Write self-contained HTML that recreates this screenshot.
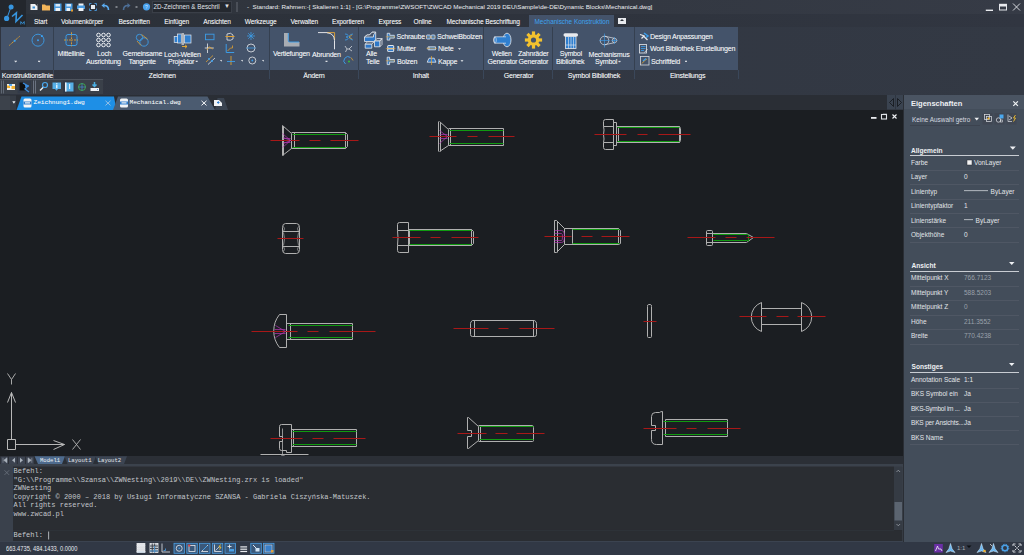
<!DOCTYPE html>
<html><head><meta charset="utf-8">
<style>
*{margin:0;padding:0;box-sizing:border-box}
html,body{width:1024px;height:555px;overflow:hidden;background:#2b2f37;font-family:"Liberation Sans",sans-serif;color:#e2e5ea}
.a{position:absolute}
.t{position:absolute;white-space:nowrap;line-height:1;font-size:6.5px}
.rl{letter-spacing:-0.2px;font-size:7px !important;margin-top:-0.45px}
.mt{color:#f4f6f8;text-shadow:0.3px 0 0 rgba(244,246,248,0.35);letter-spacing:-0.12px}
.m{font-family:"Liberation Mono",monospace}
svg{position:absolute;overflow:visible}
.rl{color:#f4f6f8;text-shadow:0.3px 0 0 rgba(244,246,248,0.35)}
.pl{color:#e2e5e9}
.pv{color:#e2e5e9}
.pd{color:#9aa1aa}
.ps{position:absolute;left:910px;width:109px;height:1px;background:#4f5764}
</style></head><body>
<!-- ===== title bar ===== -->
<div class="a" style="left:0;top:0;width:1024px;height:14px;background:linear-gradient(90deg,#2e333b,#363b46)"></div>
<div class="a" style="left:0;top:14px;width:1024px;height:13px;background:linear-gradient(90deg,#2b3038,#313641)"></div>
<div class="a" style="left:0;top:0;width:26px;height:27px;background:#23272d"></div>
<svg style="left:0;top:0" width="28" height="28" viewBox="0 0 28 28">
<g fill="#3796e0" stroke="#3796e0">
<circle cx="11.1" cy="7.1" r="2.5" stroke="none"/>
<circle cx="6.6" cy="18.4" r="2.6" stroke="none"/>
<line x1="10.6" y1="8" x2="7.2" y2="17.5" stroke-width="1"/>
<polyline points="12,16.5 16.4,12.8 16,21.5 22.5,15" fill="none" stroke-width="1.6" stroke-linejoin="miter"/>
<path d="M20.8,24.5 V21.6 L22.5,23.5 L24.2,21.6 V24.5" fill="none" stroke-width="0.9"/>
</g></svg>
<svg style="left:26px;top:0" width="130" height="14" viewBox="26 0 130 14">
<!-- new -->
<rect x="30.5" y="4" width="7" height="6" fill="#eef0f2"/><path d="M35,4 l2.5,0 v2.5z" fill="#2e333b"/><rect x="32.5" y="6.5" width="2.5" height="2" fill="#3a8fd6"/>
<!-- open -->
<path d="M42,4.5 h3 l1,1 h4 v5 h-8z" fill="#f2b45a"/>
<!-- save -->
<rect x="54" y="3.5" width="7.5" height="7.5" fill="#4a9be0"/><rect x="55.5" y="4" width="4.5" height="2.5" fill="#d9e8f5"/><rect x="55.5" y="8" width="4.5" height="3" fill="#eef2f6"/>
<!-- saveas -->
<rect x="65" y="3.5" width="7.5" height="7.5" fill="#4a9be0"/><rect x="66.5" y="4" width="4.5" height="2.5" fill="#d9e8f5"/><rect x="66.5" y="8" width="3.5" height="3" fill="#eef2f6"/><rect x="71" y="9.5" width="2" height="2" fill="#e8a030"/>
<!-- print -->
<rect x="78.5" y="3.5" width="5" height="2.5" fill="#eef2f6"/><rect x="77" y="5.5" width="8" height="3.5" fill="#4a9be0"/><rect x="78.5" y="8" width="5" height="3" fill="#eef2f6"/>
<!-- zoom extents -->
<path d="M89.5,5.5 v-2 h2 M94.5,3.5 h2 v2 M96.5,8.5 v2 h-2 M91.5,10.5 h-2 v-2" stroke="#4a9be0" stroke-width="0.9" fill="none"/><rect x="91" y="5" width="4" height="4" fill="#e8ecf0"/>
<!-- undo -->
<path d="M108.5,10 C108.5,6.5 106.5,5.5 104,5.5" stroke="#5aaaee" stroke-width="1.6" fill="none"/><path d="M101.5,5.5 L104.5,3 L104.5,8z" fill="#5aaaee"/>
<rect x="115.5" y="6.5" width="2" height="1" fill="#c8ccd2"/>
<!-- redo -->
<path d="M123.5,10 C123.5,6.5 125.5,5.5 128,5.5" stroke="#4c6e96" stroke-width="1.6" fill="none"/><path d="M130.5,5.5 L127.5,3 L127.5,8z" fill="#4c6e96"/>
<rect x="135.5" y="6.5" width="2" height="1" fill="#c8ccd2"/>
<circle cx="146.5" cy="6.8" r="3.6" fill="#4aa2ee"/><text x="146.5" y="8.8" font-size="5" fill="#cfe6fa" text-anchor="middle" font-family="Liberation Sans">?</text>
</svg>
<svg style="left:980px;top:0" width="44" height="14" viewBox="980 0 44 14">
<rect x="985.8" y="9.6" width="7.2" height="1.4" fill="#e8eaee"/>
<rect x="999.5" y="4.3" width="7" height="5.7" fill="none" stroke="#e0e3e7" stroke-width="1"/><rect x="999.5" y="4" width="7" height="2.5" fill="#e8eaee"/>
<path d="M1013,3.5 L1020,10.5 M1020,3.5 L1013,10.5" stroke="#e8eaee" stroke-width="0.9"/>
</svg>

<div class="a" style="left:152px;top:1px;width:80px;height:12px;background:#24282f;border:1px solid #3a3f48"></div>
<div class="t" style="left:153.5px;top:4px;font-size:6.3px">2D-Zeichnen &amp; Beschril</div>
<div class="t" style="left:224px;top:3px;font-size:6px;color:#e0e3e8">▼</div>
<div class="a" style="left:236px;top:2px;width:2px;height:10px;background:#4a4f58"></div>
<div class="t" style="left:247px;top:4px;font-size:6.25px;color:#eceef1"> -&nbsp; Standard: Rahmen:-[ Skalieren 1:1] - [G:\Programme\ZWSOFT\ZWCAD Mechanical 2019 DEU\Sample\de-DE\Dynamic Blocks\Mechanical.dwg]</div>

<!-- menu tabs -->
<div class="t mt" style="left:34px;top:19px">Start</div>
<div class="t mt" style="left:61px;top:19px;font-size:6.5px">Volumenkörper</div>
<div class="t mt" style="left:118.6px;top:19px">Beschriften</div>
<div class="t mt" style="left:164.3px;top:19px">Einfügen</div>
<div class="t mt" style="left:203.3px;top:19px">Ansichten</div>
<div class="t mt" style="left:244.8px;top:19px">Werkzeuge</div>
<div class="t mt" style="left:290.5px;top:19px">Verwalten</div>
<div class="t mt" style="left:332px;top:19px">Exportieren</div>
<div class="t mt" style="left:378.5px;top:19px">Express</div>
<div class="t mt" style="left:413.5px;top:19px">Online</div>
<div class="t mt" style="left:446.5px;top:19px">Mechanische Beschriftung</div>
<div class="a" style="left:529px;top:15px;width:85px;height:13px;background:#44536a"></div>
<div class="t" style="left:534.5px;top:19px;color:#3ea3ef;font-size:6.4px">Mechanische Konstruktion</div>
<div class="a" style="left:618px;top:17.5px;width:8px;height:6px;background:#e8eaee"></div>
<div class="a" style="left:620px;top:19px;width:0;height:0;border-left:2px solid transparent;border-right:2px solid transparent;border-bottom:2.5px solid #2b3038"></div>

<!-- ===== ribbon ===== -->
<div class="a" style="left:0;top:27px;width:1024px;height:68px;background:linear-gradient(90deg,#303540,#333944)"></div>
<div class="a" style="left:1px;top:27px;width:737px;height:43px;background:#44536a"></div>
<!-- panel separators -->
<div class="a" style="left:53px;top:27px;width:1px;height:43px;background:#354050"></div><div class="a" style="left:52.5px;top:70px;width:1px;height:9px;background:#3a475a"></div>
<div class="a" style="left:269px;top:27px;width:1px;height:43px;background:#354050"></div><div class="a" style="left:268.5px;top:70px;width:1px;height:9px;background:#3a475a"></div>
<div class="a" style="left:358px;top:27px;width:1px;height:43px;background:#354050"></div><div class="a" style="left:357.5px;top:70px;width:1px;height:9px;background:#3a475a"></div>
<div class="a" style="left:483px;top:27px;width:1px;height:43px;background:#354050"></div><div class="a" style="left:482.5px;top:70px;width:1px;height:9px;background:#3a475a"></div>
<div class="a" style="left:552px;top:27px;width:1px;height:43px;background:#354050"></div><div class="a" style="left:551.5px;top:70px;width:1px;height:9px;background:#3a475a"></div>
<div class="a" style="left:634px;top:27px;width:1px;height:43px;background:#354050"></div><div class="a" style="left:633.5px;top:70px;width:1px;height:9px;background:#3a475a"></div>
<div class="a" style="left:738px;top:70px;width:1px;height:9px;background:#3a475a"></div>
<!-- panel labels -->
<div class="t rl" style="left:1.8px;top:72.5px;font-size:6.4px">Konstruktionslinie</div>
<div class="t rl" style="left:148.6px;top:72.5px;font-size:6.3px">Zeichnen</div>
<div class="t rl" style="left:303.2px;top:72.5px">Ändern</div>
<div class="t rl" style="left:412.8px;top:72.5px">Inhalt</div>
<div class="t rl" style="left:503.7px;top:72.5px">Generator</div>
<div class="t rl" style="left:567.8px;top:72.5px">Symbol Bibliothek</div>
<div class="t rl" style="left:669.9px;top:72.5px">Einstellungs</div>
<!-- ribbon button labels -->
<div class="t rl" style="left:57.5px;top:50.8px;font-size:6.5px">Mittellinie</div>
<div class="t rl" style="left:97px;top:50.8px">Loch</div>
<div class="t rl" style="left:86px;top:58.3px;font-size:6.5px">Ausrichtung</div>
<div class="t rl" style="left:122.5px;top:50.8px;font-size:6.5px">Gemeinsame</div>
<div class="t rl" style="left:128.6px;top:58.3px;font-size:6.5px">Tangente</div>
<div class="t rl" style="left:164px;top:51.8px;font-size:6.5px">Loch-Wellen</div>
<div class="t rl" style="left:168px;top:58.5px;font-size:6.5px">Projektor</div>
<div class="t rl" style="left:272.9px;top:50.8px;font-size:6.5px">Vertiefungen</div>
<div class="t rl" style="left:312px;top:51.8px;font-size:6.5px">Abrunden</div>
<div class="t rl" style="left:366px;top:50.8px">Alle</div>
<div class="t rl" style="left:366px;top:58.3px">Teile</div>
<div class="t rl" style="left:396.5px;top:33.8px">Schraube</div>
<div class="t rl" style="left:397px;top:45.5px">Mutter</div>
<div class="t rl" style="left:397px;top:58.3px">Bolzen</div>
<div class="t rl" style="left:437px;top:33.8px;font-size:6.3px">SchweiBbolzen</div>
<div class="t rl" style="left:438px;top:45.5px">Niete</div>
<div class="t rl" style="left:438px;top:58.3px">Kappe</div>
<div class="t rl" style="left:491.7px;top:50.8px">Wellen</div>
<div class="t rl" style="left:487.5px;top:58.3px;font-size:6.5px">Generator</div>
<div class="t rl" style="left:518px;top:50.8px;font-size:6.5px">Zahnräder</div>
<div class="t rl" style="left:518.5px;top:58.3px;font-size:6.5px">Generator</div>
<div class="t rl" style="left:559.7px;top:50.8px">Symbol</div>
<div class="t rl" style="left:556px;top:58.3px;font-size:6.5px">Bibliothek</div>
<div class="t rl" style="left:588.5px;top:51.8px;font-size:6.5px">Mechanismus</div>
<div class="t rl" style="left:595px;top:58.5px">Symbol</div>
<div class="t rl" style="left:650px;top:33.8px">Design Anpassungen</div>
<div class="t rl" style="left:650px;top:45.5px">Wort Bibliothek Einstellungen</div>
<div class="t rl" style="left:651px;top:58.3px">Schriftfeld</div>
<svg style="left:0;top:27px" width="740" height="45" viewBox="0 27 740 45">
<g stroke-linecap="butt">
<!-- konstruktionslinie -->
<line x1="9.3" y1="45.4" x2="20" y2="36" stroke="#e0a030" stroke-width="1" stroke-dasharray="1.2,0.6"/>
<circle cx="14.7" cy="40.8" r="1.1" fill="#3aa0f0"/>
<circle cx="38" cy="40.2" r="6" fill="none" stroke="#3c9ce6" stroke-width="0.9"/>
<circle cx="38" cy="40.2" r="1" fill="#3aa0f0"/>
<rect x="41" y="35.2" width="1.8" height="1.8" fill="#3aa0f0"/>
<path d="M14.6,61 h2.2 l-1.1,1z M38,61 h2.2 l-1.1,1z" fill="#f0f2f5" stroke="#f0f2f5" stroke-width="0.5"/>
<!-- mittellinie -->
<rect x="66" y="34.5" width="11" height="11" rx="2" fill="none" stroke="#3c9ce6" stroke-width="1"/>
<line x1="64" y1="40" x2="79" y2="40" stroke="#e0a030" stroke-width="0.9" stroke-dasharray="2,1,1,1"/>
<line x1="71.5" y1="32.3" x2="71.5" y2="47" stroke="#e0a030" stroke-width="0.9" stroke-dasharray="2,1,1,1"/>
<!-- loch ausrichtung 3x3 circles -->
<g fill="none" stroke="#eef0f3" stroke-width="1">
<circle cx="98.5" cy="35" r="1.8"/><circle cx="103.5" cy="35" r="1.8"/><circle cx="108.5" cy="35" r="1.8"/>
<circle cx="98.5" cy="40" r="1.8"/><circle cx="103.5" cy="40" r="1.8"/><circle cx="108.5" cy="40" r="1.8"/>
<circle cx="98.5" cy="45" r="1.8"/><circle cx="103.5" cy="45" r="1.8"/><circle cx="108.5" cy="45" r="1.8"/>
</g>
<!-- gemeinsame tangente -->
<circle cx="139.5" cy="37.5" r="3.2" fill="none" stroke="#3c9ce6" stroke-width="0.9"/>
<circle cx="144" cy="42" r="4.2" fill="none" stroke="#3c9ce6" stroke-width="0.9"/>
<line x1="137" y1="41" x2="141" y2="45.5" stroke="#e0a030" stroke-width="0.8"/>
<line x1="141.5" y1="34.5" x2="147.5" y2="39" stroke="#e0a030" stroke-width="0.8"/>
<!-- loch-wellen projektor -->
<rect x="174.2" y="36.5" width="4" height="6" fill="#2f7fcf" stroke="#e8eaee" stroke-width="0.7"/>
<rect x="177.5" y="34" width="3.8" height="9" fill="#2f7fcf" stroke="#e8eaee" stroke-width="0.7"/>
<rect x="181.5" y="33" width="2.5" height="12" fill="#b0b4ba"/>
<rect x="184.5" y="35" width="6.5" height="8" fill="#2f7fcf" stroke="#e8eaee" stroke-width="0.7"/>
<path d="M182,46.5 h5 M185,44.8 l2,1.7 l-2,1.7" stroke="#f0b030" stroke-width="0.9" fill="none"/>
<!-- small grid -->
<rect x="205.5" y="34.2" width="8.5" height="5.5" fill="none" stroke="#3c9ce6" stroke-width="0.9"/>
<path d="M227,34 q4,-2 6,1 v4 q-2,2 -6,1z" fill="none" stroke="#e6e8ec" stroke-width="0.8"/><line x1="225.5" y1="36.5" x2="234.5" y2="36.5" stroke="#e0a030" stroke-width="1"/>
<path d="M247,36 h8 M251,32 v8 M248.2,33.2 l5.6,5.6 M253.8,33.2 l-5.6,5.6" stroke="#3c9ce6" stroke-width="0.8"/>
<path d="M204.8,48 h9 M207.5,43.5 v9.5" stroke="#e6e8ec" stroke-width="0.8"/><path d="M207,50 q2,-5 4,-2 l2,1" stroke="#e0a030" stroke-width="0.8" fill="none"/>
<path d="M226.2,44 v8.5 h8" stroke="#3c9ce6" stroke-width="1" fill="none"/><path d="M227.5,51 l3,-3 h2 v-2.5" stroke="#e0a030" stroke-width="0.8" fill="none"/>
<circle cx="251" cy="48" r="4" fill="none" stroke="#e6e8ec" stroke-width="0.8"/><line x1="246.5" y1="48" x2="255.5" y2="48" stroke="#3c9ce6" stroke-width="0.8"/>
<line x1="206" y1="62" x2="213" y2="55.5" stroke="#e0a030" stroke-width="0.8"/><line x1="208" y1="64.5" x2="215" y2="58" stroke="#e6e8ec" stroke-width="0.8"/>
<circle cx="209" cy="59" r="1" fill="#3aa0f0"/><circle cx="212" cy="61" r="1" fill="#3aa0f0"/>
<path d="M220.4,60.4 h1.6 l-0.8,0.8z M241.4,60.4 h1.6 l-0.8,0.8z M262.4,60.4 h1.6 l-0.8,0.8z" fill="#f0f2f5" stroke="#f0f2f5" stroke-width="0.5"/>
<line x1="231" y1="56" x2="231" y2="65" stroke="#e0a030" stroke-width="0.9"/><line x1="227" y1="61.5" x2="235" y2="61.5" stroke="#3c9ce6" stroke-width="0.9"/>
<circle cx="252.3" cy="60.5" r="3.5" fill="none" stroke="#e6e8ec" stroke-width="0.8"/><circle cx="252.3" cy="60.5" r="0.9" fill="#3aa0f0"/>
<!-- vertiefungen -->
<path d="M284,33 h4.5 v9 h11 v4.5 h-15.5z" fill="#a9adb3"/>
<path d="M288.3,33 v7.5 q0,1.5 1.5,1.5 h9.2" stroke="#3ca0ee" stroke-width="0.9" fill="none"/>
<!-- abrunden -->
<path d="M318,32.6 h9" stroke="#f2f3f5" stroke-width="0.9"/>
<path d="M327,32.6 h7.6 v7.4" stroke="#e6a838" stroke-width="0.9" fill="none"/>
<path d="M327,32.8 q7,0.5 7.5,7.5 v9" stroke="#f2f3f5" stroke-width="0.9" fill="none"/>
<path d="M325.5,61 h2 l-1,1z" fill="#f0f2f5" stroke="#f0f2f5" stroke-width="0.5"/>
<path d="M345,34 q3,0 3,1.5 q0,1.5 -2,1.5 q2,0 2,1.5 q0,1.5 -3,1.5 M353,34 q-3,0 -4,2.5 q1,3.5 4,3.5" stroke="#3ca0ee" stroke-width="0.8" fill="none"/>
<path d="M352,35 l-3,2 l3,2" stroke="#e0a030" stroke-width="0.7" fill="none"/>
<path d="M345,46 l2,3 l-1.5,3 M347,49 h2 l3,-3 M349,49 l3,2" stroke="#e6e8ec" stroke-width="0.7" fill="none"/>
<path d="M345.5,64 a4,4 0 0 1 5,-6.5" stroke="#3ca0ee" stroke-width="0.9" fill="none"/><path d="M351,57.5 l2,3" stroke="#e0a030" stroke-width="0.8"/><circle cx="349" cy="61.5" r="0.9" fill="#3c3"/>
<!-- alle teile -->
<g stroke="#e8eaee" stroke-width="0.8" stroke-linejoin="round">
<path d="M364.5,37 L367,35 H369.5 L372,32.2 H375.7 V40.5 L373.5,41.5 H364.5z" fill="#2f78c8"/>
<path d="M364.5,37 L367,35 H369.5 L372,32.2 H375.7 L373.5,35 V37 H370 L369.5,37z" fill="#44536a"/>
<path d="M365.2,44.2 L367.5,41.8 H374 L371.8,44.2z" fill="#44536a"/>
<rect x="365.2" y="44.2" width="6.6" height="4" fill="#2f78c8"/>
<path d="M374.5,41 L377,38.6 H382 L379.8,41z M379.8,41 L382,38.6 V44.5 L379.8,46.8z" fill="#44536a"/>
<rect x="374.5" y="41" width="5.3" height="5.8" fill="#2f78c8"/>
</g>
<!-- schraube/mutter/bolzen -->
<path d="M387.2,33.3 h2.6 v2 h4.5 v2.8 h-4.5 v2 h-2.6z" fill="#3a80c8" stroke="#e6e8ec" stroke-width="0.8"/><line x1="385.8" y1="36.8" x2="395.2" y2="36.8" stroke="#e0a030" stroke-width="0.6"/>
<rect x="387.2" y="45" width="7" height="7" rx="1.5" fill="#e6e8ec"/><rect x="388.2" y="46" width="5" height="1.8" fill="#2f78c8"/><rect x="388.2" y="49.4" width="5" height="1.8" fill="#2f78c8"/><line x1="385.8" y1="48.6" x2="395.5" y2="48.6" stroke="#e0a030" stroke-width="0.6"/>
<path d="M387.2,57.2 h2.4 v2.3 h4.8 v2.6 h-4.8 v2.5 h-2.4z" fill="#3a80c8" stroke="#e6e8ec" stroke-width="0.8"/><line x1="385.8" y1="60.8" x2="395" y2="60.8" stroke="#e0a030" stroke-width="0.6"/>
<g fill="#2f78c8" stroke="#e6e8ec" stroke-width="0.8"><rect x="426.5" y="35" width="3.8" height="4" rx="0.8"/><rect x="431.2" y="35" width="3.8" height="4" rx="0.8"/></g><line x1="426" y1="37" x2="435.5" y2="37" stroke="#e0a030" stroke-width="0.6"/>
<path d="M428.5,46.3 q-1.8,2 0,4 M429,46.8 h6.5 v3 h-6.5z" stroke="#e6e8ec" stroke-width="0.8" fill="#3a80c8"/><line x1="426.5" y1="48.3" x2="437" y2="48.3" stroke="#e0a030" stroke-width="0.6"/>
<path d="M427.2,62.2 l1.8,-4 h5.2 l1.8,4z" fill="#2f78c8" stroke="#e6e8ec" stroke-width="0.8"/><line x1="431.5" y1="56" x2="431.5" y2="65" stroke="#e0a030" stroke-width="0.7"/>
<!-- wellen generator -->
<ellipse cx="507" cy="40" rx="4" ry="6.8" fill="#2f7fcf" stroke="#e8eaee" stroke-width="0.8"/>
<rect x="494" y="36.8" width="12" height="6.4" fill="#2f7fcf"/>
<path d="M506,36.8 h-11.5 q-1.5,3.2 0,6.4 h11.5" stroke="#e8eaee" stroke-width="0.7" fill="none"/>
<ellipse cx="495" cy="40" rx="1.3" ry="3.2" fill="none" stroke="#e8eaee" stroke-width="0.6"/>
<!-- gear -->
<g transform="translate(533.5,40)">
<circle r="5.8" fill="#f2c12e"/>
<g fill="#f2c12e"><rect x="-1.6" y="-8.6" width="3.2" height="17.2"/><rect x="-1.6" y="-8.6" width="3.2" height="17.2" transform="rotate(45)"/><rect x="-1.6" y="-8.6" width="3.2" height="17.2" transform="rotate(90)"/><rect x="-1.6" y="-8.6" width="3.2" height="17.2" transform="rotate(135)"/></g>
<circle r="2.6" fill="#44536a"/>
</g>
<!-- symbol bibliothek -->
<rect x="563.5" y="33.2" width="14.5" height="3.3" rx="1.5" fill="#e8eaee"/>
<rect x="565.5" y="36.5" width="10.5" height="12" fill="#2f7fcf" stroke="#e8eaee" stroke-width="0.8"/>
<path d="M568.5,37 v11.5 M571,37 v11.5 M573.5,37 v11.5 M565.5,45 h10.5" stroke="#e8eaee" stroke-width="0.6"/>
<!-- mechanismus -->
<circle cx="604.5" cy="40.5" r="4.3" fill="none" stroke="#e0e3e8" stroke-width="0.7"/>
<circle cx="614.5" cy="40.5" r="2.2" fill="none" stroke="#e0e3e8" stroke-width="0.7"/>
<path d="M604.5,36.2 L614.5,38.3 M604.5,44.8 L614.5,42.7" stroke="#e0e3e8" stroke-width="0.7"/>
<path d="M604.5,33.5 v14 M599.5,40.5 h10 M614.5,37 v7 M611.5,40.5 h6" stroke="#3ca0ee" stroke-width="0.6"/>
<path d="M618.5,61.2 h2 l-1,1z" fill="#f0f2f5" stroke="#f0f2f5" stroke-width="0.5"/>
<!-- einstellungs -->
<path d="M640,34.5 l3,1 l4.5,4.5 M641.5,38.5 l3,-3" stroke="#e8eaee" stroke-width="1.3" fill="none"/><path d="M644,33 l4,3 l-2,1.5" stroke="#3ca0ee" stroke-width="1.5" fill="none"/>
<rect x="639.5" y="44.5" width="7" height="8.5" fill="none" stroke="#d6d9de" stroke-width="0.9"/><path d="M641,46.5 h4.5 M641,48.5 h4.5 M641,50.5 h3" stroke="#3ca0ee" stroke-width="0.8"/><path d="M644.5,52.5 l3,-3.5" stroke="#e0e3e8" stroke-width="0.8"/>
<rect x="640.5" y="56.5" width="8.5" height="8.5" fill="none" stroke="#d6d9de" stroke-width="0.8"/><path d="M642,63.5 q2,-3 5,-4.5" stroke="#e0a030" stroke-width="0.9" fill="none"/><path d="M643,61 l3,-2.5" stroke="#3ca0ee" stroke-width="1.3"/>
<path d="M195.7,61 h2 l-1,1z M685,61 h2 l-1,1z M458.5,48.5 h2 l-1,1z M461,60.5 h2 l-1,1z" fill="#f0f2f5" stroke="#f0f2f5" stroke-width="0.5"/>
</g>
</svg>




<!-- ===== file tabs ===== -->
<div class="a" style="left:0;top:95px;width:904px;height:15px;background:#2a2e35"></div>
<svg style="left:0;top:79px" width="110" height="32" viewBox="0 79 110 32">
<rect x="0" y="79" width="32.3" height="15" fill="#3a4049"/><rect x="32.6" y="79" width="70.5" height="15" fill="#3a4049"/>
<rect x="0" y="79" width="32.3" height="1" fill="#4d535d"/><rect x="32.6" y="79" width="70.5" height="1" fill="#4d535d"/>
<rect x="1" y="80.5" width="1" height="13" fill="#5f6773"/><rect x="3" y="80.5" width="1" height="13" fill="#5f6773"/>
<rect x="33" y="80.5" width="1" height="13" fill="#6a7280"/><rect x="35" y="80.5" width="1" height="13" fill="#6a7280"/>
<rect x="7" y="84" width="8" height="6" fill="#f4f0e6"/><rect x="7" y="85.5" width="3" height="2.5" fill="#f0b030"/><rect x="11.5" y="86" width="3.5" height="3" fill="#f0b030"/><rect x="9" y="84" width="3" height="2" fill="#5aaaee"/>
<rect x="17.5" y="80.8" width="13.5" height="12.5" fill="#323a48"/>
<path d="M19.5,82.5 h4 l2,3 v5 h-6z" fill="#101010"/><path d="M23,83 l5,3 l-3,3 l4,3 M25,86 h4" stroke="#3c8ee0" stroke-width="1.3" fill="none"/>
<path d="M40,90.5 l3.5,-3.5" stroke="#f0f2f5" stroke-width="1.5"/><circle cx="45" cy="85" r="2.5" fill="none" stroke="#4aa8ee" stroke-width="1.2"/>
<path d="M52.5,82.5 h8.5 v6.5 h-3 l-1.5,1.8 l-1.5,-1.8 h-2.5z" fill="#55aee6"/><rect x="56.2" y="83.2" width="1.2" height="1.2" fill="#fff"/><rect x="56.2" y="85" width="1.2" height="3.3" fill="#fff"/>
<rect x="63" y="80.8" width="12.5" height="12.5" fill="#323a48"/>
<rect x="65" y="82.5" width="8.5" height="9" fill="#55aee6"/><rect x="65" y="82.5" width="1.5" height="9" fill="#f0f2f5"/><rect x="69" y="84" width="1.2" height="5" fill="#dbeaf7"/>
<circle cx="82" cy="87" r="3.5" fill="none" stroke="#3cb050" stroke-width="0.9"/><path d="M78.5,87 h7 M82,83.5 v7" stroke="#4a90d8" stroke-width="0.7"/>
<path d="M94.5,82 v4 M92.5,84.5 l2,2 l2,-2" stroke="#4ab0e6" stroke-width="1.5" fill="none"/><rect x="90.5" y="88" width="8.5" height="3" fill="#f0f2f5"/><rect x="97" y="89" width="1" height="1" fill="#4aa0e6"/>
<!-- file tabs -->
<rect x="0" y="95.5" width="10" height="14.5" fill="#3c424b"/><rect x="10" y="95.5" width="6" height="14.5" fill="#363c45"/>
<path d="M12.3,101.3 h3.2 l-1.6,2.4z" fill="#f0f2f5"/>
<path d="M16.6,110 L21.5,96.5 H114 L116.5,110z" fill="#1e8fe6"/>
<path d="M113,110 L118,96.5 H207.5 L215,110z" fill="#4b5b70"/>
<path d="M215,110 L217.5,98 H224 L228,110z" fill="#3a4350"/>
<rect x="23.5" y="98.5" width="8" height="9" rx="1.5" fill="#f2f4f6"/><rect x="23.5" y="101.5" width="8" height="3" fill="#2f7fcf"/><rect x="25" y="102.3" width="5" height="1.2" fill="#f2f4f6"/>
<rect x="120" y="98.5" width="8" height="9" rx="1.5" fill="#f2f4f6"/><rect x="120" y="101.5" width="8" height="3" fill="#2f7fcf"/><rect x="121.5" y="102.3" width="5" height="1.2" fill="#f2f4f6"/>
<path d="M105.5,100.8 l5,4.6 M110.5,100.8 l-5,4.6" stroke="#9fc4e6" stroke-width="0.9"/>
<path d="M201.5,100.8 l5,4.6 M206.5,100.8 l-5,4.6" stroke="#f4f6f8" stroke-width="1"/>
<rect x="214" y="100" width="8" height="6" fill="#f0f2f5"/><path d="M219,100 h3 v3" fill="#3a4350"/><rect x="217" y="102" width="2.5" height="1" fill="#2f7fcf"/><rect x="217.8" y="101.2" width="1" height="2.6" fill="#2f7fcf"/>
</svg>
<div class="t m" style="left:33.5px;top:99.5px;font-size:6.1px;color:#f4f6f8;text-shadow:0.3px 0 0 rgba(244,246,248,0.35)">Zeichnung1.dwg</div>
<div class="t m" style="left:129.5px;top:99.5px;font-size:6.1px;color:#f4f6f8;text-shadow:0.3px 0 0 rgba(244,246,248,0.35)">Mechanical.dwg</div>


<!-- ===== drawing ===== -->
<div class="a" style="left:0;top:110px;width:903px;height:346px;background:#1b1e22"></div>
<svg style="left:0;top:110px" width="903" height="345" viewBox="0 110 903 345">
<path d="M282.5,125.5 V155.5 M283.5,126.5 V155.5 M282.5,125.5 L291.5,133.5 V148.5 L282.5,155.5" stroke="#b0b0b0" stroke-width="1" fill="none"/>
<path d="M291.5,132.5 H345.5 L347.5,134.5 V146.5 L345.5,148.5 H291.5 M294.5,132.5 V148.5 M345.5,132.5 V148.5" stroke="#b0b0b0" stroke-width="1" fill="none"/>
<line x1="292.5" y1="134.5" x2="345.5" y2="134.5" stroke="#109a10" stroke-width="1"/>
<line x1="292.5" y1="147.5" x2="345.5" y2="147.5" stroke="#109a10" stroke-width="1"/>
<line x1="270.5" y1="140.5" x2="299.5" y2="140.5" stroke="#a81818" stroke-width="1"/>
<line x1="309.5" y1="140.5" x2="320.5" y2="140.5" stroke="#a81818" stroke-width="1"/>
<line x1="330.5" y1="140.5" x2="358.5" y2="140.5" stroke="#a81818" stroke-width="1"/>
<path d="M282.5,133.5 L290.5,140.5 L282.5,147.5 M283.5,138.5 H290.5 M283.5,142.5 H290.5 M283.5,137.5 L290.5,140.5 L283.5,143.5" stroke="#b438b4" stroke-width="0.7" fill="none"/>
<path d="M438.5,121.5 V151.5 M440.5,122.5 V151.5 M439.5,121.5 L448.5,129.5 V145.5 L439.5,151.5" stroke="#b0b0b0" stroke-width="1" fill="none"/>
<path d="M448.5,128.5 H503.5 V145.5 H448.5 M450.5,128.5 V145.5" stroke="#b0b0b0" stroke-width="1" fill="none"/>
<line x1="449.5" y1="130.5" x2="503.5" y2="130.5" stroke="#109a10" stroke-width="1"/>
<line x1="449.5" y1="143.5" x2="503.5" y2="143.5" stroke="#109a10" stroke-width="1"/>
<line x1="429.5" y1="136.5" x2="456.5" y2="136.5" stroke="#a81818" stroke-width="1"/>
<line x1="467.5" y1="136.5" x2="477.5" y2="136.5" stroke="#a81818" stroke-width="1"/>
<line x1="488.5" y1="136.5" x2="514.5" y2="136.5" stroke="#a81818" stroke-width="1"/>
<path d="M439.5,130.5 L447.5,136.5 L439.5,143.5 M439.5,134.5 H447.5 M439.5,138.5 H447.5" stroke="#b438b4" stroke-width="0.7" fill="none"/>
<path d="M605.5,119.5 H613.5 V149.5 H605.5 Q603.5,149.5 603.5,147.5 V142.5 Q604.5,139.5 603.5,134.5 Q604.5,129.5 603.5,126.5 V121.5 Q603.5,119.5 605.5,119.5 M603.5,126.5 H613.5 M603.5,142.5 H613.5" stroke="#b0b0b0" stroke-width="1" fill="none"/>
<path d="M613.5,122.5 H616.5 V145.5 H613.5" stroke="#b0b0b0" stroke-width="1" fill="none"/>
<path d="M616.5,126.5 H679.5 L680.5,128.5 V140.5 L679.5,142.5 H616.5 M618.5,126.5 V142.5 M679.5,126.5 V142.5" stroke="#b0b0b0" stroke-width="1" fill="none"/>
<line x1="617.5" y1="127.5" x2="679.5" y2="127.5" stroke="#109a10" stroke-width="1"/>
<line x1="617.5" y1="141.5" x2="679.5" y2="141.5" stroke="#109a10" stroke-width="1"/>
<line x1="594.5" y1="134.5" x2="626.5" y2="134.5" stroke="#a81818" stroke-width="1"/>
<line x1="637.5" y1="134.5" x2="647.5" y2="134.5" stroke="#a81818" stroke-width="1"/>
<line x1="658.5" y1="134.5" x2="690.5" y2="134.5" stroke="#a81818" stroke-width="1"/>
<path d="M285.5,223.5 H296.5 Q299.5,223.5 299.5,227.5 V249.5 Q299.5,253.5 296.5,253.5 H285.5 Q282.5,253.5 282.5,249.5 V227.5 Q282.5,223.5 285.5,223.5 M282.5,231.5 H299.5 M282.5,246.5 H299.5" stroke="#b0b0b0" stroke-width="1" fill="none"/>
<path d="M283.5,226.5 Q285.5,228.5 283.5,231.5 M283.5,232.5 Q285.5,238.5 283.5,245.5 M283.5,246.5 Q285.5,249.5 283.5,251.5 M298.5,226.5 Q296.5,228.5 298.5,231.5 M298.5,232.5 Q296.5,238.5 298.5,245.5 M298.5,246.5 Q296.5,249.5 298.5,251.5" stroke="#b0b0b0" stroke-width="0.7" fill="none"/>
<line x1="277.5" y1="238.5" x2="303.5" y2="238.5" stroke="#a81818" stroke-width="1"/>
<path d="M399.5,222.5 H408.5 V252.5 H399.5 Q397.5,252.5 397.5,250.5 V245.5 Q398.5,237.5 397.5,230.5 V224.5 Q397.5,222.5 399.5,222.5 M397.5,230.5 H408.5 M397.5,245.5 H408.5" stroke="#b0b0b0" stroke-width="1" fill="none"/>
<path d="M408.5,229.5 H471.5 L473.5,231.5 V243.5 L471.5,245.5 H408.5 M409.5,229.5 V245.5 M471.5,229.5 V245.5" stroke="#b0b0b0" stroke-width="1" fill="none"/>
<line x1="409.5" y1="230.5" x2="471.5" y2="230.5" stroke="#109a10" stroke-width="1"/>
<line x1="409.5" y1="244.5" x2="471.5" y2="244.5" stroke="#109a10" stroke-width="1"/>
<line x1="392.5" y1="237.5" x2="420.5" y2="237.5" stroke="#a81818" stroke-width="1"/>
<line x1="430.5" y1="237.5" x2="440.5" y2="237.5" stroke="#a81818" stroke-width="1"/>
<line x1="451.5" y1="237.5" x2="478.5" y2="237.5" stroke="#a81818" stroke-width="1"/>
<path d="M554.5,220.5 V252.5 M557.5,221.5 V252.5 M554.5,220.5 H556.5 L564.5,228.5 V244.5 L556.5,252.5 H554.5" stroke="#b0b0b0" stroke-width="1" fill="none"/>
<path d="M564.5,228.5 H618.5 L620.5,230.5 V243.5 L618.5,244.5 H564.5 M572.5,228.5 V244.5 M618.5,228.5 V244.5" stroke="#b0b0b0" stroke-width="1" fill="none"/>
<line x1="572.5" y1="229.5" x2="619.5" y2="229.5" stroke="#109a10" stroke-width="1"/>
<line x1="572.5" y1="243.5" x2="619.5" y2="243.5" stroke="#109a10" stroke-width="1"/>
<line x1="544.5" y1="236.5" x2="571.5" y2="236.5" stroke="#a81818" stroke-width="1"/>
<line x1="581.5" y1="236.5" x2="592.5" y2="236.5" stroke="#a81818" stroke-width="1"/>
<line x1="601.5" y1="236.5" x2="629.5" y2="236.5" stroke="#a81818" stroke-width="1"/>
<path d="M554.5,230.5 H561.5 Q564.5,230.5 564.5,236.5 Q564.5,242.5 561.5,242.5 H554.5 M554.5,233.5 H561.5 Q562.5,233.5 562.5,236.5 Q562.5,240.5 561.5,240.5 H554.5" stroke="#b438b4" stroke-width="0.7" fill="none"/>
<path d="M707.5,230.5 H711.5 Q712.5,230.5 712.5,231.5 V244.5 Q712.5,245.5 711.5,245.5 H707.5 Q706.5,245.5 706.5,244.5 V231.5 Q706.5,230.5 707.5,230.5 M706.5,233.5 H712.5 M706.5,242.5 H712.5" stroke="#b0b0b0" stroke-width="1" fill="none"/>
<path d="M712.5,233.5 H746.5 L753.5,237.5 L746.5,242.5 H712.5" stroke="#b0b0b0" stroke-width="1" fill="none"/>
<line x1="713.5" y1="234.5" x2="747.5" y2="234.5" stroke="#109a10" stroke-width="1"/>
<line x1="713.5" y1="240.5" x2="747.5" y2="240.5" stroke="#109a10" stroke-width="1"/>
<line x1="748.5" y1="234.5" x2="748.5" y2="241.5" stroke="#109a10" stroke-width="1"/>
<line x1="687.5" y1="237.5" x2="715.5" y2="237.5" stroke="#a81818" stroke-width="1"/>
<line x1="725.5" y1="237.5" x2="736.5" y2="237.5" stroke="#a81818" stroke-width="1"/>
<line x1="746.5" y1="237.5" x2="774.5" y2="237.5" stroke="#a81818" stroke-width="1"/>
<path d="M279.5,314.5 H286.5 V347.5 H279.5 A26.5,26.5 0 0 1 279.5,314.5" stroke="#b0b0b0" stroke-width="1" fill="none"/>
<path d="M286.5,323.5 H352.5 V339.5 H286.5 M290.5,323.5 V339.5" stroke="#b0b0b0" stroke-width="1" fill="none"/>
<line x1="288.5" y1="325.5" x2="352.5" y2="325.5" stroke="#109a10" stroke-width="1"/>
<line x1="288.5" y1="337.5" x2="352.5" y2="337.5" stroke="#109a10" stroke-width="1"/>
<line x1="251.5" y1="331.5" x2="297.5" y2="331.5" stroke="#a81818" stroke-width="1"/>
<line x1="307.5" y1="331.5" x2="318.5" y2="331.5" stroke="#a81818" stroke-width="1"/>
<line x1="329.5" y1="331.5" x2="375.5" y2="331.5" stroke="#a81818" stroke-width="1"/>
<path d="M275.5,325.5 L285.5,331.5 L275.5,337.5 M274.5,329.5 H285.5 M274.5,333.5 H285.5" stroke="#b438b4" stroke-width="0.7" fill="none"/>
<path d="M472.5,320.5 H534.5 Q536.5,321.5 536.5,323.5 V334.5 Q536.5,336.5 534.5,336.5 H472.5 Q470.5,336.5 470.5,334.5 V323.5 Q470.5,321.5 472.5,320.5 M474.5,320.5 V336.5 M533.5,320.5 V336.5" stroke="#b0b0b0" stroke-width="1" fill="none"/>
<line x1="453.5" y1="328.5" x2="488.5" y2="328.5" stroke="#a81818" stroke-width="1"/>
<line x1="498.5" y1="328.5" x2="508.5" y2="328.5" stroke="#a81818" stroke-width="1"/>
<line x1="519.5" y1="328.5" x2="554.5" y2="328.5" stroke="#a81818" stroke-width="1"/>
<path d="M648.5,304.5 H650.5 Q651.5,304.5 651.5,306.5 V336.5 Q651.5,337.5 650.5,337.5 H648.5 Q647.5,337.5 647.5,336.5 V306.5 Q647.5,304.5 648.5,304.5" stroke="#b0b0b0" stroke-width="1" fill="none"/>
<line x1="643.5" y1="321.5" x2="656.5" y2="321.5" stroke="#a81818" stroke-width="1"/>
<path d="M761.5,302.5 V331.5 M801.5,302.5 V331.5 M761.5,308.5 H801.5 M761.5,324.5 H801.5" stroke="#b0b0b0" stroke-width="1" fill="none"/>
<path d="M761.5,302.5 A15.4,15.4 0 0 0 761.5,331.5 M801.5,302.5 A15.4,15.4 0 0 1 801.5,331.5" stroke="#b0b0b0" stroke-width="1" fill="none"/>
<line x1="739.5" y1="316.5" x2="766.5" y2="316.5" stroke="#a81818" stroke-width="1"/>
<line x1="776.5" y1="316.5" x2="788.5" y2="316.5" stroke="#a81818" stroke-width="1"/>
<line x1="797.5" y1="316.5" x2="825.5" y2="316.5" stroke="#a81818" stroke-width="1"/>
<path d="M281.5,424.5 H291.5 V452.5 H286.5 V450.5 H281.5 Q279.5,450.5 279.5,448.5 V441.5 H282.5 V436.5 H279.5 V426.5 Q279.5,424.5 281.5,424.5" stroke="#b0b0b0" stroke-width="1" fill="none"/>
<path d="M282.5,428.5 V455.5" stroke="#b0b0b0" stroke-width="0.8" fill="none"/>
<path d="M291.5,429.5 H356.5 V446.5 H291.5 M293.5,429.5 V446.5" stroke="#b0b0b0" stroke-width="1" fill="none"/>
<line x1="292.5" y1="431.5" x2="356.5" y2="431.5" stroke="#109a10" stroke-width="1"/>
<line x1="292.5" y1="444.5" x2="356.5" y2="444.5" stroke="#109a10" stroke-width="1"/>
<line x1="270.5" y1="438.5" x2="302.5" y2="438.5" stroke="#a81818" stroke-width="1"/>
<line x1="312.5" y1="438.5" x2="323.5" y2="438.5" stroke="#a81818" stroke-width="1"/>
<line x1="333.5" y1="438.5" x2="365.5" y2="438.5" stroke="#a81818" stroke-width="1"/>
<line x1="260.5" y1="454.5" x2="308.5" y2="454.5" stroke="#b0b0b0" stroke-width="1"/>
<path d="M280.5,454.5 Q282.5,457.5 285.5,454.5" stroke="#b0b0b0" stroke-width="0.7" fill="none"/>
<path d="M467.5,417.5 H468.5 L478.5,426.5 V440.5 L468.5,448.5 H467.5 V436.5 H471.5 V430.5 H467.5 Z" stroke="#b0b0b0" stroke-width="1" fill="none"/>
<path d="M478.5,425.5 H532.5 Q533.5,425.5 533.5,427.5 V440.5 Q533.5,441.5 532.5,441.5 H478.5 M480.5,425.5 V441.5" stroke="#b0b0b0" stroke-width="1" fill="none"/>
<line x1="479.5" y1="426.5" x2="533.5" y2="426.5" stroke="#109a10" stroke-width="1"/>
<line x1="479.5" y1="439.5" x2="533.5" y2="439.5" stroke="#109a10" stroke-width="1"/>
<line x1="457.5" y1="433.5" x2="486.5" y2="433.5" stroke="#a81818" stroke-width="1"/>
<line x1="495.5" y1="433.5" x2="507.5" y2="433.5" stroke="#a81818" stroke-width="1"/>
<line x1="516.5" y1="433.5" x2="544.5" y2="433.5" stroke="#a81818" stroke-width="1"/>
<path d="M662.5,411.5 V444.5 H656.5 Q651.5,444.5 651.5,439.5 V430.5 H655.5 V425.5 H651.5 V416.5 Q651.5,412.5 655.5,412.5 H659.5 Q660.5,411.5 662.5,411.5" stroke="#b0b0b0" stroke-width="1" fill="none"/>
<path d="M665.5,419.5 H727.5 V436.5 H665.5 Z" stroke="#b0b0b0" stroke-width="1" fill="none"/>
<line x1="663.5" y1="421.5" x2="727.5" y2="421.5" stroke="#109a10" stroke-width="1"/>
<line x1="663.5" y1="434.5" x2="727.5" y2="434.5" stroke="#109a10" stroke-width="1"/>
<line x1="643.5" y1="428.5" x2="676.5" y2="428.5" stroke="#a81818" stroke-width="1"/>
<line x1="686.5" y1="428.5" x2="696.5" y2="428.5" stroke="#a81818" stroke-width="1"/>
<line x1="707.5" y1="428.5" x2="740.5" y2="428.5" stroke="#a81818" stroke-width="1"/>
<path d="M11.5,392.5 V439.5 M7.5,402.5 L11.5,392.5 L15.5,402.5 M15.5,444.5 H64.5 M53.5,440.5 L64.5,444.5 L53.5,449.5 M7.5,439.5 H15.5 V449.5 H7.5 Z" stroke="#b8b8b8" stroke-width="1" fill="none"/>
<path d="M7.5,373.5 L11.5,379.5 L15.5,373.5 M11.5,379.5 V384.5 M72.5,439.5 L80.5,449.5 M80.5,439.5 L72.5,449.5" stroke="#b8b8b8" stroke-width="0.9" fill="none"/>
</svg>

<!-- ===== layout tabs ===== -->
<div class="a" style="left:0;top:456px;width:903px;height:10px;background:#2b2f36"></div>


<!-- ===== command ===== -->
<div class="a" style="left:0;top:466px;width:903px;height:75px;background:#2a2d32;border-top:1px solid #424955"></div>


<!-- ===== status ===== -->
<div class="a" style="left:0;top:541px;width:1024px;height:14px;background:#313845;border-top:1px solid #3b4350"></div>
<svg style="left:0;top:455px" width="904" height="100" viewBox="0 455 904 100">
<rect x="0.8" y="456.7" width="7.2" height="7.3" fill="#3c4350"/><rect x="9" y="456.7" width="7.8" height="7.3" fill="#3c4350"/><rect x="17.8" y="456.7" width="7.2" height="7.3" fill="#3c4350"/><rect x="26" y="456.7" width="7.8" height="7.3" fill="#3c4350"/>
<path d="M3,457.8 v5 M7,457.8 l-3.3,2.5 l3.3,2.5z" fill="#a9b1bb" stroke="#a9b1bb" stroke-width="0.5"/>
<path d="M15,457.8 l-3,2.5 l3,2.5z" fill="#a9b1bb"/>
<path d="M20,457.8 l3,2.5 l-3,2.5z" fill="#a9b1bb"/>
<path d="M31.8,457.8 v5 M28,457.8 l3.3,2.5 l-3.3,2.5z" fill="#a9b1bb" stroke="#a9b1bb" stroke-width="0.5"/>
<path d="M34.6,456.3 H65 L62,464 H38z" fill="#4e6b8e"/>
<path d="M64.5,456.3 H96 L93,464 H67.5z" fill="#3c4553"/>
<path d="M95.5,456.3 H127 L124,464 H98.5z" fill="#3c4553"/>
<!-- command frame -->
<rect x="0" y="464" width="903" height="2.8" fill="#3b424c"/>
<rect x="0" y="466.5" width="13" height="74.5" fill="#3a414c"/>
<rect x="13" y="466.5" width="881" height="63" fill="#2a2d32"/>
<rect x="13" y="530" width="881" height="1" fill="#3f4853"/>
<rect x="13" y="530.2" width="890" height="10.8" fill="#2a2d32"/>
<rect x="894" y="466.5" width="8.5" height="63.5" fill="#353b44"/>
<rect x="894.5" y="502" width="7.5" height="18.5" fill="#5b6470"/>
<path d="M896.5,472 l1.8,-1.8 l1.8,1.8 M896.5,524 l1.8,1.8 l1.8,-1.8" stroke="#aab0b8" stroke-width="0.7" fill="none"/>
<rect x="902.5" y="466.5" width="1" height="74.5" fill="#434a55"/>
<path d="M4.5,470.3 l4.6,4.6 M9.1,470.3 l-4.6,4.6" stroke="#6c747f" stroke-width="0.8"/>
<rect x="48.3" y="531.5" width="0.8" height="8" fill="#d0d4d9"/>
</svg>
<div class="t m" style="left:40px;top:458px;font-size:5.6px;color:#f0f2f5">Model1</div>
<div class="t m" style="left:68px;top:458px;font-size:5.6px;color:#e6e9ed">Layout1</div>
<div class="t m" style="left:97.7px;top:458px;font-size:5.6px;color:#e6e9ed">Layout2</div>
<div class="m" style="position:absolute;left:13.5px;top:467.2px;font-size:7px;line-height:8.5px;color:#c2c6cb;white-space:pre">Befehl:
"G:\\Programme\\Szansa\\ZWNesting\\2019\\DE\\ZWNesting.zrx is loaded"
ZWNesting
Copyright © 2000 – 2018 by Usługi Informatyczne SZANSA - Gabriela Ciszyńska-Matuszek.
All rights reserved.
www.zwcad.pl</div>
<div class="t m" style="left:13.5px;top:531.5px;font-size:7px;color:#c6cacf">Befehl:</div>
<!-- status -->
<div class="t" style="left:6px;top:545.9px;font-size:6.8px;color:#e6e9ed;transform:scaleX(0.84);transform-origin:0 0">663.4735, 484.1433, 0.0000</div>
<svg style="left:130px;top:541px" width="150" height="14" viewBox="130 541 150 14">
<g fill="none" stroke="#e8eaee" stroke-width="0.8">
<rect x="137.0" y="543.5" width="1.6" height="1.6" fill="#f0f2f5"/><rect x="137.0" y="545.6" width="1.6" height="1.6" fill="#f0f2f5"/><rect x="137.0" y="547.7" width="1.6" height="1.6" fill="#f0f2f5"/><rect x="137.0" y="549.8" width="1.6" height="1.6" fill="#f0f2f5"/><rect x="139.1" y="543.5" width="1.6" height="1.6" fill="#f0f2f5"/><rect x="139.1" y="545.6" width="1.6" height="1.6" fill="#f0f2f5"/><rect x="139.1" y="547.7" width="1.6" height="1.6" fill="#f0f2f5"/><rect x="139.1" y="549.8" width="1.6" height="1.6" fill="#f0f2f5"/><rect x="141.2" y="543.5" width="1.6" height="1.6" fill="#f0f2f5"/><rect x="141.2" y="545.6" width="1.6" height="1.6" fill="#f0f2f5"/><rect x="141.2" y="547.7" width="1.6" height="1.6" fill="#f0f2f5"/><rect x="141.2" y="549.8" width="1.6" height="1.6" fill="#f0f2f5"/><rect x="143.3" y="543.5" width="1.6" height="1.6" fill="#f0f2f5"/><rect x="143.3" y="545.6" width="1.6" height="1.6" fill="#f0f2f5"/><rect x="143.3" y="547.7" width="1.6" height="1.6" fill="#f0f2f5"/><rect x="143.3" y="549.8" width="1.6" height="1.6" fill="#f0f2f5"/><rect x="137" y="551.5" width="8" height="1" fill="#4aa0e6"/>
<rect x="150" y="543.5" width="8" height="9" fill="#b8bdc4"/><path d="M152.3,543.5 v9 M154.6,543.5 v9 M150,546 h8 M150,548.5 h8 M150,551 h8" stroke="#2e343e" stroke-width="0.8"/><path d="M154.6,546 v6.5 M150,551 h8" stroke="#4aa0e6" stroke-width="0.8"/>
<path d="M162,543.5 v8.5 h8" stroke="#cfd3d9" stroke-width="0.9" fill="none"/><path d="M163.5,550.5 h2 v-2" stroke="#4aa0e6" stroke-width="0.8" fill="none"/>
</g>
<g fill="#3a587a" stroke="#4aa0e6" stroke-width="0.8">
<rect x="174" y="543.3" width="10.5" height="10"/><rect x="186.8" y="543.3" width="10.5" height="10"/><rect x="199.5" y="543.3" width="10.5" height="10"/><rect x="212.3" y="543.3" width="10.5" height="10"/><rect x="225" y="543.3" width="10.5" height="10"/><rect x="250.8" y="543.3" width="10.5" height="10"/><rect x="263.5" y="543.3" width="10.5" height="10"/>
</g>
<circle cx="179.2" cy="548.3" r="3" fill="none" stroke="#e8eaee" stroke-width="0.8"/><circle cx="179.2" cy="548.3" r="0.8" fill="#4aa0e6"/>
<rect x="189" y="545.5" width="6" height="6" fill="none" stroke="#e8eaee" stroke-width="0.8"/><rect x="188.3" y="544.6" width="2" height="2" fill="#e04040"/>
<path d="M201.5,551.5 l6.5,-6.5 M201.5,551.5 h6.5" stroke="#e8eaee" stroke-width="0.8" fill="none"/><path d="M203,550 l4,-4" stroke="#4aa0e6" stroke-width="1"/>
<path d="M214.5,544.5 v7 h7" stroke="#e8eaee" stroke-width="0.8" fill="none"/><path d="M215.5,550.5 l4,-4" stroke="#e8eaee" stroke-width="0.7"/><path d="M220.5,544.5 l-1.5,2.5 h2 l-1.5,2.5" stroke="#f0c030" stroke-width="0.9" fill="none"/>
<path d="M227.5,546.5 h4 M229.5,544.5 v4" stroke="#e8eaee" stroke-width="0.9"/><rect x="229" y="549" width="5" height="2.5" fill="#4aa0e6"/>
<rect x="240.3" y="546.3" width="6.8" height="1.2" fill="#e8eaee"/><rect x="240.3" y="548.6" width="6.8" height="1.2" fill="#e8eaee"/><rect x="240.3" y="550.9" width="6.8" height="1.2" fill="#e8eaee"/>
<path d="M253,545 l3,3" stroke="#e8eaee" stroke-width="1"/><rect x="255.5" y="548" width="4" height="3.5" fill="#cfe3f5"/>
<rect x="265" y="545" width="7" height="7" fill="#3a7fc8" stroke="#cfd3d9" stroke-width="0.6"/><rect x="271" y="550" width="2.5" height="2.5" fill="#e0a040"/>
</svg>
<svg style="left:925px;top:541px" width="99" height="14" viewBox="925 541 99 14">
<rect x="934.2" y="544" width="8.6" height="8.5" fill="#6a2fa6"/><path d="M935.5,551 l2,-5 l1,3 h2.5 l1,2" stroke="#f0f0f4" stroke-width="0.8" fill="none"/>
<path d="M950.5,543.5 L952.1,548.8 L955,552.5 L950.5,551 L946,552.5 L948.9,548.8z" fill="#6cb8f2" stroke="#d8ecfc" stroke-width="0.5"/>
<path d="M966.5,545.5 h5 l-2.5,2.5z" fill="#0d0f12"/>
<path d="M981.5,543.5 L983.1,548.8 L986,552.5 L981.5,551 L977,552.5 L979.9,548.8z" fill="#6cb8f2" stroke="#d8ecfc" stroke-width="0.5"/><circle cx="984.5" cy="551" r="1.3" fill="#f0b030"/>
<path d="M993.5,543.5 L995.1,548.8 L998,552.5 L993.5,551 L989,552.5 L991.9,548.8z" fill="#6cb8f2" stroke="#d8ecfc" stroke-width="0.5"/><path d="M990,544 l2,2" stroke="#f0f0f0" stroke-width="0.7"/>
<circle cx="1005" cy="548" r="2.8" fill="none" stroke="#4aa0e6" stroke-width="1.6"/><circle cx="1005" cy="548" r="3.8" fill="none" stroke="#4aa0e6" stroke-width="0.9" stroke-dasharray="1.3,1.3"/>
<path d="M1013,546 v-2 h2.5 M1018.5,544 h2.5 v2 M1021,550 v2 h-2.5 M1015.5,552 h-2.5 v-2 M1014.5,545.5 l2,2 M1019.5,545.5 l-2,2 M1014.5,550.5 l2,-2 M1019.5,550.5 l-2,-2" stroke="#dfe2e6" stroke-width="0.9" fill="none"/>
</svg>
<div class="t" style="left:957px;top:544.5px;font-size:6px;color:#a8aeb6">1:1</div>


<!-- ===== properties ===== -->
<div class="a" style="left:903px;top:95px;width:2px;height:447px;background:#2a2e35"></div>
<div class="a" style="left:904px;top:95px;width:120px;height:447px;background:#434d5a"></div>
<div class="a" style="left:904px;top:95px;width:120px;height:14px;background:#4a5462"></div>
<svg style="left:886px;top:95px" width="20" height="16" viewBox="886 95 20 16">
<rect x="887" y="95" width="16" height="14.5" fill="#3a4350"/>
<rect x="895" y="95" width="1" height="14.5" fill="#2e3540"/>
<path d="M893.5,98.5 L889.5,102.5 L893.5,106.5 Z" fill="none" stroke="#161a1f" stroke-width="0.9"/>
<path d="M897.5,98.5 L901.5,102.5 L897.5,106.5 Z" fill="none" stroke="#161a1f" stroke-width="0.9"/>
</svg>
<svg style="left:868px;top:111px" width="32" height="12" viewBox="868 111 32 12">
<rect x="871" y="117" width="5.5" height="1.8" fill="#e8eaee"/>
<rect x="881.5" y="114.5" width="5" height="4.5" fill="none" stroke="#e0e3e8" stroke-width="1.1"/><rect x="883" y="113.8" width="4" height="1" fill="#e0e3e8"/>
<path d="M892.5,114.5 l4,4 M896.5,114.5 l-4,4" stroke="#f0f2f5" stroke-width="1.1"/>
</svg>
<div class="t" style="left:911px;top:99.5px;font-size:7.5px;font-weight:bold;color:#eef0f3">Eigenschaften</div>
<svg style="left:1010px;top:99px" width="12" height="10" viewBox="1010 99 12 10"><path d="M1013.3,101.3 l4.6,4.6 M1017.9,101.3 l-4.6,4.6" stroke="#f2f4f6" stroke-width="1.2"/></svg>
<div class="t" style="left:912px;top:116.5px;color:#d6dae0;font-size:6.4px">Keine Auswahl getro</div>
<svg style="left:905px;top:110px" width="119" height="160" viewBox="905 110 119 160">
<path d="M974.5,117.8 h4.5 l-2.25,2.8z" fill="#eef0f3"/>
<rect x="910" y="125" width="70" height="0.8" fill="#3b424d"/>
<rect x="982.5" y="113" width="10" height="11.5" fill="#404753"/><rect x="994.5" y="113" width="10" height="11.5" fill="#404753"/><rect x="1006.5" y="113" width="10" height="11.5" fill="#404753"/>
<rect x="984.5" y="114.5" width="5" height="5" fill="none" stroke="#e0e3e8" stroke-width="0.7"/><rect x="986.5" y="116.5" width="5" height="5" fill="none" stroke="#e0e3e8" stroke-width="0.7"/><path d="M988.5,117 v3 M987,118.5 h3" stroke="#e8b030" stroke-width="0.7"/>
<rect x="999.5" y="114.5" width="4" height="4" fill="#4aa8ee"/><circle cx="998.5" cy="120" r="2.2" fill="none" stroke="#e0e3e8" stroke-width="0.7"/><rect x="1000.5" y="120" width="2" height="2" fill="none" stroke="#e0e3e8" stroke-width="0.6"/>
<path d="M1008,114.5 v7 h4 M1009,116 l3,2 l-3,2" stroke="#e0e3e8" stroke-width="0.7" fill="none"/><path d="M1015.5,115 l-2,3 h2 l-2,3.5" stroke="#f0c030" stroke-width="0.9" fill="none"/>
<path d="M1009.8,146.5 h6 l-3,3.2z" fill="#eef0f3"/>
<rect x="910" y="155" width="109" height="1" fill="#c9cdd3"/>
<rect x="967" y="160" width="5" height="5" fill="#f4f4f4" stroke="#2a2e34" stroke-width="0.5"/>
<rect x="964" y="190.3" width="24" height="0.8" fill="#cfd3d9"/>
<rect x="964" y="219.3" width="9" height="0.8" fill="#cfd3d9"/>
<path d="M1009,262 h5.5 l-2.75,3z" fill="#eef0f3"/>
<rect x="910" y="271" width="109" height="1" fill="#c9cdd3"/>
</svg>
<div class="t" style="left:911px;top:147.5px;font-size:6.6px;font-weight:bold;color:#eef0f3">Allgemein</div>
<div class="t pl" style="left:911px;top:159.5px">Farbe</div><div class="t pv" style="left:974px;top:159.5px">VonLayer</div>
<div class="ps" style="top:169.5px"></div>
<div class="t pl" style="left:911px;top:174px">Layer</div><div class="t pv" style="left:964px;top:174px">0</div>
<div class="ps" style="top:184px"></div>
<div class="t pl" style="left:911px;top:188.5px">Linientyp</div><div class="t pv" style="left:990.6px;top:188.5px">ByLayer</div>
<div class="ps" style="top:198.5px"></div>
<div class="t pl" style="left:911px;top:203px">Linientypfaktor</div><div class="t pv" style="left:964px;top:203px">1</div>
<div class="ps" style="top:213px"></div>
<div class="t pl" style="left:911px;top:217.5px">Linienstärke</div><div class="t pv" style="left:975.6px;top:217.5px">ByLayer</div>
<div class="ps" style="top:227.3px"></div>
<div class="t pl" style="left:911px;top:232px">Objekthöhe</div><div class="t pv" style="left:964px;top:232px">0</div>
<div class="ps" style="top:241.8px"></div>
<div class="t" style="left:911.5px;top:263px;font-size:6.6px;font-weight:bold;color:#eef0f3">Ansicht</div>
<div class="t pl" style="left:911px;top:275px">Mittelpunkt X</div><div class="t pd" style="left:964px;top:275px">766.7123</div>
<div class="ps" style="top:285.5px"></div>
<div class="t pl" style="left:911px;top:289.5px">Mittelpunkt Y</div><div class="t pd" style="left:964px;top:289.5px">588.5203</div>
<div class="ps" style="top:300px"></div>
<div class="t pl" style="left:911px;top:304px">Mittelpunkt Z</div><div class="t pd" style="left:964px;top:304px">0</div>
<div class="ps" style="top:314.6px"></div>
<div class="t pl" style="left:911px;top:318.5px">Höhe</div><div class="t pd" style="left:964px;top:318.5px">211.3552</div>
<div class="ps" style="top:329px"></div>
<div class="t pl" style="left:911px;top:333px">Breite</div><div class="t pd" style="left:964px;top:333px">770.4238</div>
<div class="ps" style="top:343.5px"></div>
<svg style="left:905px;top:355px" width="119" height="25" viewBox="905 355 119 25">
<path d="M1009,363 h5.5 l-2.75,3z" fill="#eef0f3"/>
<rect x="910" y="372" width="109" height="1" fill="#c9cdd3"/>
</svg>
<div class="t" style="left:911.5px;top:364px;font-size:6.6px;font-weight:bold;color:#eef0f3">Sonstiges</div>
<div class="t pl" style="left:911px;top:376.8px">Annotation Scale</div><div class="t pv" style="left:964px;top:376.8px">1:1</div>
<div class="ps" style="top:387.6px"></div>
<div class="t pl" style="left:911px;top:391px">BKS Symbol ein</div><div class="t pv" style="left:964px;top:391px">Ja</div>
<div class="ps" style="top:401.7px"></div>
<div class="t pl" style="left:911px;top:405.8px;letter-spacing:-0.25px">BKS-Symbol im ...</div><div class="t pv" style="left:964px;top:405.8px">Ja</div>
<div class="ps" style="top:416px"></div>
<div class="t pl" style="left:911px;top:420px;letter-spacing:-0.17px">BKS per Ansichts...</div><div class="t pv" style="left:964px;top:420px">Ja</div>
<div class="ps" style="top:430px"></div>
<div class="t pl" style="left:911px;top:434.8px">BKS Name</div>
<div class="ps" style="top:444px"></div>

</body></html>
